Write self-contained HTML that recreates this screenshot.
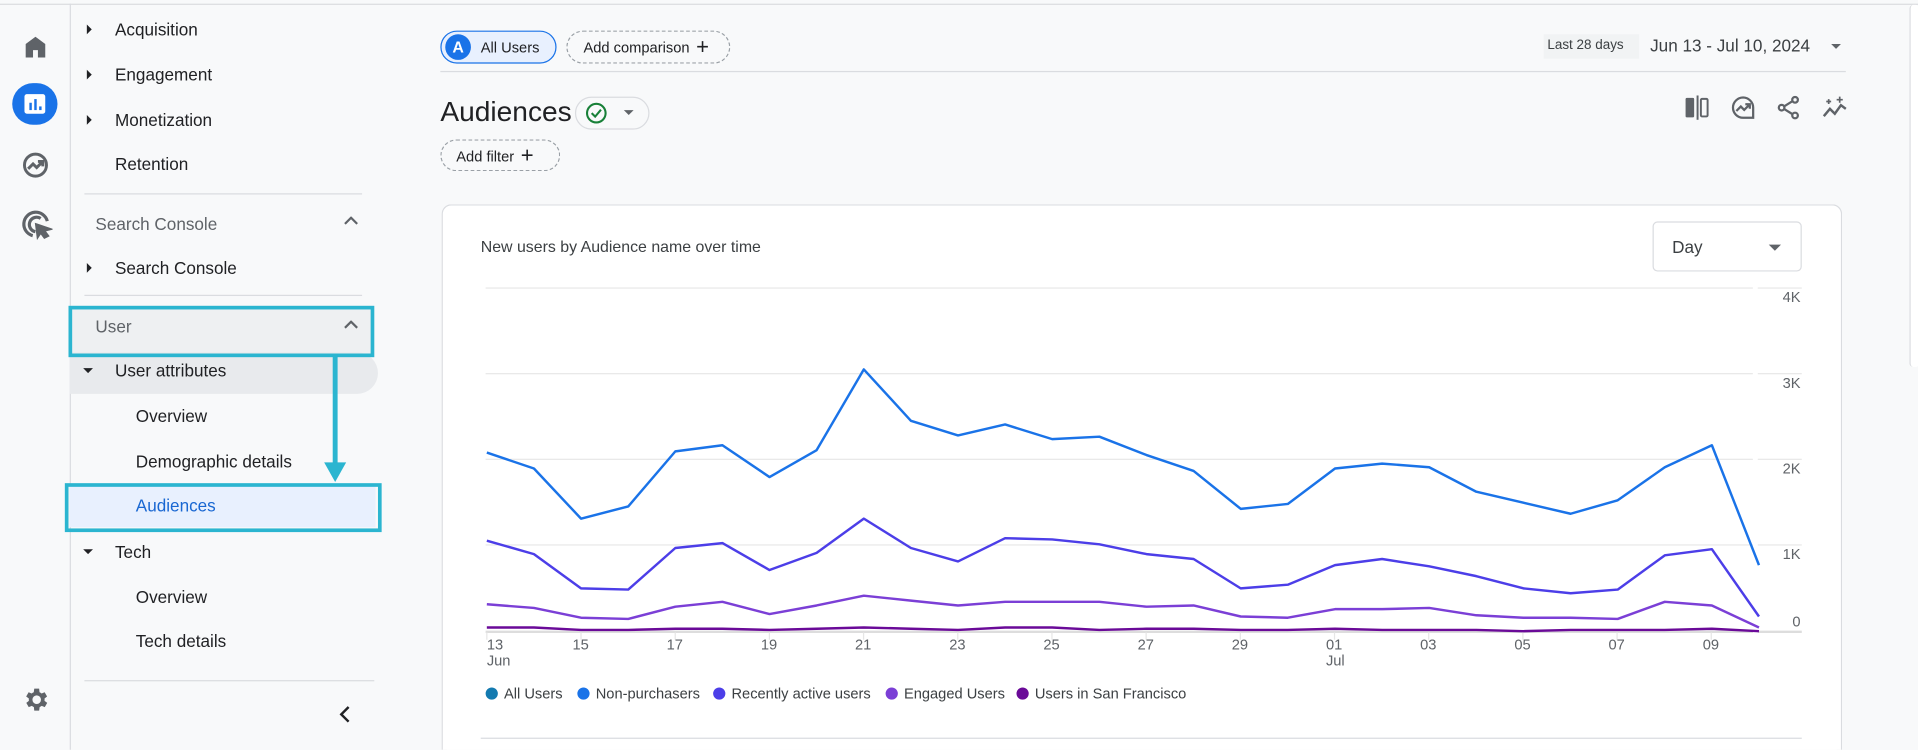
<!DOCTYPE html>
<html><head><meta charset="utf-8"><style>
html,body{margin:0;padding:0;width:1918px;height:750px;max-height:750px;overflow:hidden;background:#f8f9fa;font-family:"Liberation Sans",Arial,sans-serif;color:#202124}
#w{position:absolute;left:0;top:0;width:1568px;height:613px;overflow:hidden;transform:scale(1.22321);transform-origin:0 0}
.a{position:absolute}
.nav{position:absolute;font-size:14px;color:#202124;white-space:nowrap}
.tri{position:absolute;width:0;height:0}
.tr{border-top:4px solid transparent;border-bottom:4px solid transparent;border-left:4px solid #202124}
.td{border-left:4px solid transparent;border-right:4px solid transparent;border-top:4px solid #202124}
.hr{position:absolute;height:1px;background:#dadce0}
.chip{position:absolute;border:1px dashed #9aa0a6;border-radius:14px;font-size:12px;box-sizing:border-box}
</style></head><body><div id="w">
<div class="a" style="left:0;top:3px;width:1568px;height:1px;background:#dadce0"></div>
<div class="a" style="left:57px;top:3px;width:1px;height:610px;background:#dadce0"></div>
<!-- rail icons -->
<svg class="a" style="left:17px;top:26px" width="24" height="24" viewBox="0 0 24 24"><path d="M4 21V10l8-6 8 6v11h-6v-6h-4v6z" fill="#5f6368"/></svg>
<div class="a" style="left:10px;top:68px;width:37px;height:34px;border-radius:17px;background:#1a73e8"></div>
<svg class="a" style="left:19px;top:76px" width="19" height="18" viewBox="0 0 19 18"><rect x="1" y="1" width="17" height="16" rx="2" fill="#fff"/><rect x="5" y="8" width="2" height="6" fill="#1a73e8"/><rect x="9" y="5" width="2" height="9" fill="#1a73e8"/><rect x="13" y="11" width="2" height="3" fill="#1a73e8"/></svg>
<svg class="a" style="left:17px;top:123px" width="24" height="24" viewBox="0 0 24 24" fill="none" stroke="#5f6368" stroke-width="2.4"><circle cx="12" cy="12" r="9"/><path d="M6 15l4-4 3 3 5-5M14 9h4v4"/></svg>
<svg class="a" style="left:17px;top:171px" width="26" height="26" viewBox="0 0 24 24" fill="none" stroke="#5f6368" stroke-width="2.4"><path d="M20 9A9 9 0 1 0 9 20"/><path d="M15 7a5.5 5.5 0 1 0-4 10"/><path d="M12 12l9 3-4 1 3 4-2 1-3-4-2 3z" fill="#5f6368"/></svg>
<svg class="a" style="left:17px;top:560px" width="24" height="24" viewBox="0 0 24 24"><path fill="#5f6368" d="M19.4 13a7.5 7.5 0 0 0 0-2l2.1-1.6-2-3.5-2.5 1a7 7 0 0 0-1.7-1L15 3h-4l-.4 2.9a7 7 0 0 0-1.7 1l-2.5-1-2 3.5L6.6 11a7.5 7.5 0 0 0 0 2l-2.1 1.6 2 3.5 2.5-1a7 7 0 0 0 1.7 1L11 21h4l.4-2.9a7 7 0 0 0 1.7-1l2.5 1 2-3.5zM13 15.5a3.5 3.5 0 1 1 0-7 3.5 3.5 0 0 1 0 7z"/></svg>
<!-- nav -->
<div class="tri tr" style="left:71px;top:20px"></div><div class="nav" style="left:94px;top:16px">Acquisition</div>
<div class="tri tr" style="left:71px;top:57px"></div><div class="nav" style="left:94px;top:53px">Engagement</div>
<div class="tri tr" style="left:71px;top:94px"></div><div class="nav" style="left:94px;top:90px">Monetization</div>
<div class="nav" style="left:94px;top:126px">Retention</div>
<div class="hr" style="left:69px;top:158px;width:227px"></div>
<div class="nav" style="left:78px;top:175px;color:#5f6368">Search Console</div>
<svg class="a" style="left:281px;top:177px" width="12" height="8" viewBox="0 0 12 8" fill="none" stroke="#5f6368" stroke-width="1.8"><path d="M1 6l5-5 5 5"/></svg>
<div class="tri tr" style="left:71px;top:215px"></div><div class="nav" style="left:94px;top:211px">Search Console</div>
<div class="hr" style="left:69px;top:241px;width:227px"></div>
<div class="a" style="left:57px;top:250px;width:247px;height:39px;background:#eef0f2"></div>
<div class="nav" style="left:78px;top:259px;color:#5f6368">User</div>
<svg class="a" style="left:281px;top:262px" width="12" height="8" viewBox="0 0 12 8" fill="none" stroke="#5f6368" stroke-width="1.8"><path d="M1 6l5-5 5 5"/></svg>
<div class="a" style="left:57px;top:288px;width:252px;height:34px;background:#e8eaed;border-radius:0 17px 17px 0"></div>
<div class="tri td" style="left:68px;top:301px"></div><div class="nav" style="left:94px;top:295px">User attributes</div>
<div class="nav" style="left:111px;top:332px">Overview</div>
<div class="nav" style="left:111px;top:369px">Demographic details</div>
<div class="a" style="left:57px;top:397px;width:250px;height:34px;background:#e8f0fe"></div>
<div class="nav" style="left:111px;top:405px;color:#1967d2">Audiences</div>
<div class="tri td" style="left:68px;top:449px"></div><div class="nav" style="left:94px;top:443px">Tech</div>
<div class="nav" style="left:111px;top:480px">Overview</div>
<div class="nav" style="left:111px;top:516px">Tech details</div>
<div class="hr" style="left:69px;top:556px;width:237px"></div>
<svg class="a" style="left:277px;top:577px" width="10" height="14" viewBox="0 0 10 14" fill="none" stroke="#202124" stroke-width="2"><path d="M8 1L2 7l6 6"/></svg>
<!-- annotations -->
<div class="a" style="left:56px;top:250px;width:244px;height:36px;border:3px solid #2bb5d0"></div>
<div class="a" style="left:272px;top:289px;width:4px;height:92px;background:#2bb5d0"></div>
<div class="tri" style="left:265px;top:378px;border-left:9px solid transparent;border-right:9px solid transparent;border-top:16px solid #2bb5d0"></div>
<div class="a" style="left:53px;top:395px;width:253px;height:34px;border:3px solid #2bb5d0"></div>
<!-- top bar -->
<div class="a" style="left:360px;top:25px;width:95px;height:27px;box-sizing:border-box;border:1px solid #1a73e8;border-radius:14px;background:#e8f0fe"></div>
<div class="a" style="left:364px;top:28px;width:21px;height:21px;border-radius:50%;background:#1a73e8;color:#fff;font-size:13px;font-weight:bold;text-align:center;line-height:21px">A</div>
<div class="a" style="left:393px;top:32px;font-size:12px">All Users</div>
<div class="chip" style="left:463px;top:25px;width:134px;height:27px;padding:6px 0 0 13px">Add comparison <span style="font-size:18px;position:relative;top:1px;left:2px;line-height:10px">+</span></div>
<div class="hr" style="left:360px;top:58px;width:1149px"></div>
<div class="a" style="left:1262px;top:28px;width:78px;height:20px;background:#f1f3f4"></div>
<div class="a" style="left:1265px;top:31px;font-size:11px;color:#3c4043">Last 28 days</div>
<div class="a" style="left:1349px;top:29px;font-size:14px;color:#3c4043">Jun 13 - Jul 10, 2024</div>
<div class="tri td" style="left:1497px;top:36px;border-top-color:#5f6368"></div>
<div class="a" style="left:360px;top:78px;font-size:23px">Audiences</div>
<div class="a" style="left:470px;top:79px;width:61px;height:27px;box-sizing:border-box;border:1px solid #dadce0;border-radius:14px"></div>
<svg class="a" style="left:478px;top:83px" width="19" height="19" viewBox="0 0 20 20" fill="none" stroke="#188038" stroke-width="1.8"><circle cx="10" cy="10" r="8"/><path d="M6 10l3 3 5-6"/></svg>
<div class="tri td" style="left:510px;top:90px;border-top-color:#5f6368"></div>
<div class="chip" style="left:360px;top:114px;width:98px;height:26px;padding:6px 0 0 12px">Add filter <span style="font-size:18px;position:relative;top:1px;left:2px;line-height:10px">+</span></div>
<!-- action icons -->
<svg class="a" style="left:1377px;top:78px" width="22" height="20" viewBox="0 0 22 20"><rect x="1" y="2" width="7" height="16" rx="1" fill="#5f6368"/><rect x="10" y="0" width="1.6" height="20" fill="#5f6368"/><rect x="13.5" y="2.8" width="5.5" height="14.4" rx="1" fill="none" stroke="#5f6368" stroke-width="1.6"/></svg>
<svg class="a" style="left:1414px;top:77px" width="22" height="22" viewBox="0 0 24 24" fill="none" stroke="#5f6368" stroke-width="2"><path d="M21 12a9 9 0 1 0-9 9h9z"/><path d="M6 15l4-4 3 3 5-5M14 9h4v4"/></svg>
<svg class="a" style="left:1451px;top:77px" width="22" height="22" viewBox="0 0 24 24" fill="none" stroke="#5f6368" stroke-width="2"><circle cx="18" cy="5" r="2.5"/><circle cx="6" cy="12" r="2.5"/><circle cx="18" cy="19" r="2.5"/><path d="M8 11l8-5M8 13l8 5"/></svg>
<svg class="a" style="left:1488px;top:77px" width="24" height="22" viewBox="0 0 24 22" fill="none" stroke="#5f6368" stroke-width="2"><path d="M3 18l5-6 4 4 5-7 4 3"/><path d="M5 6h4M7 4v4M16 2v5M13.5 4.5h5" stroke-width="1.4"/></svg>
<!-- scrollbar -->
<div class="a" style="left:1561px;top:4px;width:7px;height:296px;background:#fff;border-left:1px solid #dadce0;border-radius:3px"></div>
<!-- card -->
<div class="a" style="left:361px;top:167px;width:1145px;height:446px;background:#fff;border:1px solid #dadce0;border-bottom:none;border-radius:8px 8px 0 0;box-sizing:border-box"></div>
<div class="a" style="left:393px;top:194px;font-size:13px;color:#3c4043">New users by Audience name over time</div>
<div class="a" style="left:1351px;top:181px;width:122px;height:41px;box-sizing:border-box;border:1px solid #dadce0;border-radius:4px"></div>
<div class="a" style="left:1367px;top:194px;font-size:14px;color:#3c4043">Day</div>
<div class="tri td" style="left:1446px;top:200px;border-top-color:#5f6368;border-left-width:5px;border-right-width:5px;border-top-width:5px"></div>
<svg class="a" style="left:0;top:0" width="1568" height="613" viewBox="0 0 1568 613" font-family="Liberation Sans, Arial, sans-serif">
<g stroke="#e6e6e6" stroke-width="1">
<path d="M397 235.5H1433M1437 235.5H1473M397 305.5H1433M1437 305.5H1473M397 375.5H1433M1437 375.5H1473M397 445.5H1433M1437 445.5H1473"/>
<path d="M397 516.5H1433M1437 516.5H1473" stroke="#ddd" stroke-width="2"/>
<path d="M398 517v6M475 517v6M552 517v6M629 517v6M706 517v6M783 517v6M860 517v6M937 517v6M1014 517v6M1091 517v6M1168 517v6M1245 517v6M1322 517v6M1399 517v6"/>
</g>
<g fill="#5f6368" font-size="12" text-anchor="end">
<text x="1472" y="247">4K</text><text x="1472" y="317">3K</text><text x="1472" y="387">2K</text><text x="1472" y="457">1K</text><text x="1472" y="512">0</text>
</g>
<g fill="#5f6368" font-size="12">
<text x="398" y="531">13</text><text x="398" y="544">Jun</text><text x="468" y="531">15</text><text x="545" y="531">17</text><text x="622" y="531">19</text><text x="699" y="531">21</text><text x="776" y="531">23</text><text x="853" y="531">25</text><text x="930" y="531">27</text><text x="1007" y="531">29</text><text x="1084" y="531">01</text><text x="1084" y="544">Jul</text><text x="1161" y="531">03</text><text x="1238" y="531">05</text><text x="1315" y="531">07</text><text x="1392" y="531">09</text>
</g>
<g fill="none" stroke-width="2" stroke-linejoin="round">
<polyline stroke="#1a73e8" points="398,370 436.5,383 475,424 513.6,414 552.1,369 590.6,364 629.1,390 667.6,368 706.2,302 744.7,344 783.2,356 821.7,347 860.2,359 898.8,357 937.3,372 975.8,385 1014.3,416 1052.8,412 1091.4,383 1129.9,379 1168.4,382 1206.9,402 1245.4,411 1284,420 1322.5,409 1361,382 1399.5,364 1438,462"/>
<polyline stroke="#4c3ee8" points="398,442 436.5,453 475,481 513.6,482 552.1,448 590.6,444 629.1,466 667.6,452 706.2,424 744.7,448 783.2,459 821.7,440 860.2,441 898.8,445 937.3,453 975.8,457 1014.3,481 1052.8,478 1091.4,462 1129.9,457 1168.4,463 1206.9,471 1245.4,481 1284,485 1322.5,482 1361,454 1399.5,449 1438,504"/>
<polyline stroke="#7b3fd6" points="398,494 436.5,497 475,505 513.6,506 552.1,496 590.6,492 629.1,502 667.6,495 706.2,487 744.7,491 783.2,495 821.7,492 860.2,492 898.8,492 937.3,496 975.8,495 1014.3,504 1052.8,505 1091.4,498 1129.9,498 1168.4,497 1206.9,503 1245.4,505 1284,505 1322.5,506 1361,492 1399.5,495 1438,513"/>
<polyline stroke="#6a0a98" points="398,513 436.5,513 475,515 513.6,515 552.1,514 590.6,514 629.1,515 667.6,514 706.2,513 744.7,514 783.2,515 821.7,513 860.2,513 898.8,515 937.3,514 975.8,514 1014.3,515 1052.8,515 1091.4,514 1129.9,515 1168.4,515 1206.9,515 1245.4,516 1284,515 1322.5,515 1361,515 1399.5,514 1438,516"/>
</g>
<g font-size="12" fill="#3c4043">
<circle cx="402" cy="567" r="5" fill="#137ab0"/><text x="412" y="571">All Users</text>
<circle cx="477" cy="567" r="5" fill="#1a73e8"/><text x="487" y="571">Non-purchasers</text>
<circle cx="588" cy="567" r="5" fill="#4c3ee8"/><text x="598" y="571">Recently active users</text>
<circle cx="729" cy="567" r="5" fill="#7b3fd6"/><text x="739" y="571">Engaged Users</text>
<circle cx="836" cy="567" r="5" fill="#6a0a98"/><text x="846" y="571">Users in San Francisco</text>
</g>
<path d="M393 603.5H1473" stroke="#dadce0"/>
</svg>
</div></body></html>
